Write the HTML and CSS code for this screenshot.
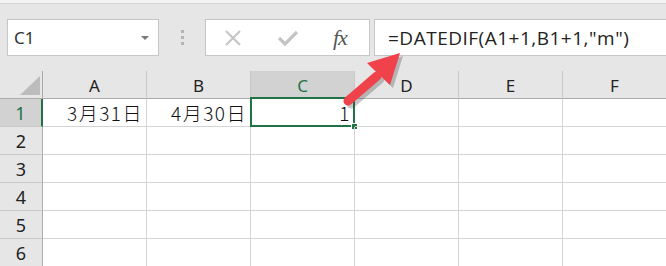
FILE: index.html
```html
<!doctype html>
<html>
  <head>
    <meta charset="utf-8">
    <title>DATEDIF</title>
    <link rel="stylesheet" href="styles.css">
  </head>
  <body>

    <div class="topline"></div>

    <section class="toolbar">
      <div class="namebox">
        <span>C1</span>
        <span class="caret"></span>
      </div>
      <div class="grip"><i></i><i></i><i></i></div>
      <div class="fxbox">
        <svg class="btn" width="20" height="20" viewBox="0 0 20 20">
          <path d="M3 3 L17 17 M17 3 L3 17" stroke="#c4c4c4" stroke-width="2" fill="none"/>
        </svg>
        <svg class="btn" width="22" height="20" viewBox="0 0 22 20">
          <path d="M2 10 L8 16 L20 4" stroke="#c4c4c4" stroke-width="3.2" fill="none"/>
        </svg>
        <span class="fx">fx</span>
      </div>
      <div class="formula">=DATEDIF(A1+1,B1+1,"m")</div>
    </section>

    <section class="sheet">
      <div class="corner"><span class="tri"></span></div>
      <div class="colhead">A</div>
      <div class="colhead">B</div>
      <div class="colhead active">C</div>
      <div class="colhead">D</div>
      <div class="colhead">E</div>
      <div class="colhead">F</div>

      <div class="rowhead active">1</div>
      <div class="cell">3月31日</div>
      <div class="cell">4月30日</div>
      <div class="cell selected">1<span class="handle"></span></div>
      <div class="cell"></div>
      <div class="cell"></div>
      <div class="cell"></div>

      <div class="rowhead">2</div>
      <div class="cell"></div><div class="cell"></div><div class="cell"></div>
      <div class="cell"></div><div class="cell"></div><div class="cell"></div>

      <div class="rowhead">3</div>
      <div class="cell"></div><div class="cell"></div><div class="cell"></div>
      <div class="cell"></div><div class="cell"></div><div class="cell"></div>

      <div class="rowhead">4</div>
      <div class="cell"></div><div class="cell"></div><div class="cell"></div>
      <div class="cell"></div><div class="cell"></div><div class="cell"></div>

      <div class="rowhead">5</div>
      <div class="cell"></div><div class="cell"></div><div class="cell"></div>
      <div class="cell"></div><div class="cell"></div><div class="cell"></div>

      <div class="rowhead">6</div>
      <div class="cell"></div><div class="cell"></div><div class="cell"></div>
      <div class="cell"></div><div class="cell"></div><div class="cell"></div>
    </section>

    <!-- callout arrow pointing at the formula -->
    <svg class="arrow" width="666" height="266" viewBox="0 0 666 266">
      <g transform="translate(3 3)" opacity="0.3">
        <path d="M348 101 L377 76" stroke="#444" stroke-width="9" stroke-linecap="round" fill="none"/>
        <path d="M400 53 L367 63 L390 85 Z" fill="#444"/>
      </g>
      <path d="M348 101 L377 76" stroke="#f0424a" stroke-width="9" stroke-linecap="round" fill="none"/>
      <path d="M400 53 L367 63 L390 85 Z" fill="#f0424a"/>
    </svg>

  </body>
</html>
```

FILE: styles.css
```css
* {
  box-sizing: border-box;
}

html, body {
  margin: 0;
  padding: 0;
}

body {
  width: 666px;
  height: 266px;
  overflow: hidden;
  position: relative;
  background: #e6e6e6;
  font-family: "Noto Sans", "Noto Sans CJK SC", sans-serif;
  color: #222;
}

.topline {
  height: 4px;
  background: #f3f3f3;
  border-bottom: 1px solid #d4d4d4;
}

/* name box + formula bar */

.toolbar {
  height: 67px;
  display: flex;
  align-items: flex-start;
  padding: 15px 0 0 7px;
}

.namebox {
  width: 152px;
  height: 37px;
  background: #fff;
  border: 1px solid #c6c6c6;
  display: flex;
  align-items: center;
  justify-content: space-between;
  padding: 0 9px 0 6px;
  font-size: 17px;
  color: #333;
}

.caret {
  width: 0;
  height: 0;
  border-left: 4px solid transparent;
  border-right: 4px solid transparent;
  border-top: 4px solid #777;
}

.grip {
  width: 46px;
  height: 37px;
  display: flex;
  flex-direction: column;
  align-items: center;
  justify-content: center;
  gap: 3px;
}

.grip i {
  width: 3px;
  height: 3px;
  background: #b4b4b4;
}

.fxbox {
  width: 165px;
  height: 37px;
  background: #fff;
  border: 1px solid #c6c6c6;
  display: flex;
  align-items: center;
  padding: 0 0 0 17px;
  gap: 34px;
}

.fx {
  font-family: "Liberation Serif", serif;
  font-style: italic;
  font-size: 22px;
  color: #555;
  letter-spacing: -1px;
}

.formula {
  flex: 1;
  height: 37px;
  margin-left: 4px;
  background: #fff;
  border: 1px solid #c6c6c6;
  border-right: 0;
  display: flex;
  align-items: center;
  padding-left: 13px;
  font-family: "Open Sans", sans-serif;
  font-size: 19px;
  letter-spacing: 0.5px;
  color: #222;
}

/* grid */

.sheet {
  display: grid;
  grid-template-columns: 43px repeat(6, 104px);
  grid-template-rows: 28px repeat(6, 28px);
  background: #fff;
}

.corner {
  background: #e6e6e6;
  border-right: 1px solid #ababab;
  border-bottom: 1px solid #ababab;
  display: flex;
  align-items: flex-end;
  justify-content: flex-end;
  padding: 0 2px 3px 0;
}

.tri {
  width: 0;
  height: 0;
  border-left: 20px solid transparent;
  border-bottom: 19px solid #bcbcbc;
}

.colhead {
  background: #e6e6e6;
  border-right: 1px solid #c8c8c8;
  border-bottom: 1px solid #ababab;
  display: flex;
  align-items: center;
  justify-content: center;
  font-size: 17px;
  padding-top: 2px;
}

.colhead.active {
  background: #d2d2d2;
  color: #217346;
  border-bottom: 2px solid #217346;
}

.rowhead {
  background: #e6e6e6;
  border-right: 1px solid #ababab;
  border-bottom: 1px solid #c8c8c8;
  display: flex;
  align-items: center;
  justify-content: center;
  font-size: 18px;
}

.rowhead.active {
  background: #d2d2d2;
  color: #217346;
  border-right: 2px solid #217346;
}

.cell {
  border-right: 1px solid #d4d4d4;
  border-bottom: 1px solid #d4d4d4;
  display: flex;
  align-items: center;
  justify-content: flex-end;
  padding-right: 3px;
  font-family: "Noto Sans CJK SC", sans-serif;
  font-weight: 300;
  font-size: 19px;
  letter-spacing: 1.5px;
  color: #111;
  position: relative;
}

.cell.selected {
  border: 2px solid #217346;
  margin: -2px 0 0 -1px;
  padding-right: 2px;
}

.handle {
  position: absolute;
  right: -5px;
  bottom: -5px;
  width: 7px;
  height: 7px;
  background: #217346;
  border: 1px solid #fff;
}

.arrow {
  position: absolute;
  left: 0;
  top: 0;
  pointer-events: none;
}
```
